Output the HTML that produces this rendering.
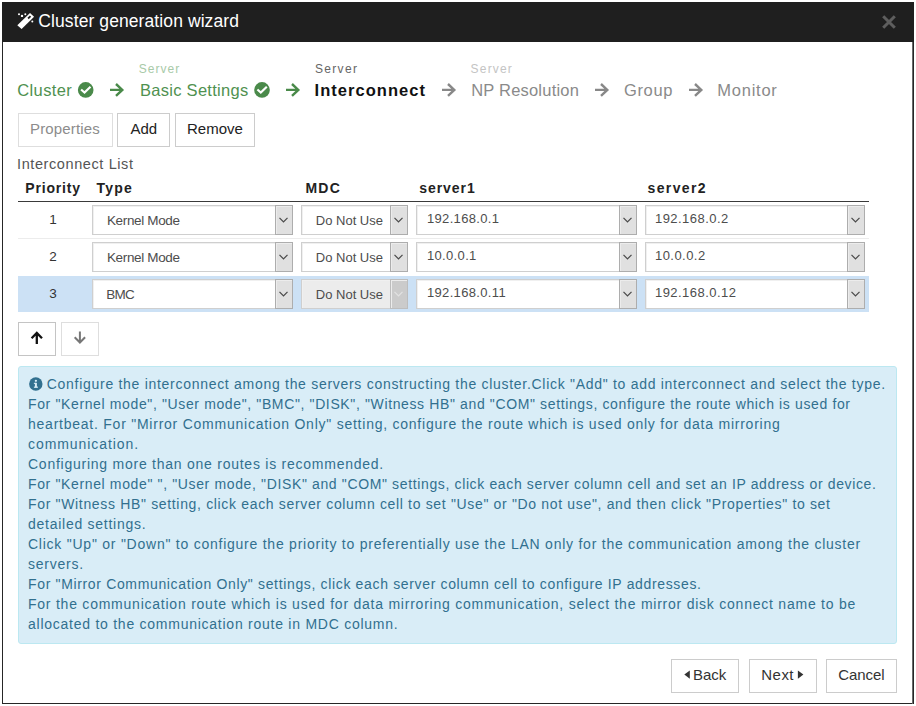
<!DOCTYPE html>
<html><head><meta charset="utf-8">
<style>
*{box-sizing:border-box;margin:0;padding:0}
html,body{width:916px;height:706px;background:#fff;overflow:hidden;font-family:"Liberation Sans",sans-serif}
.a{position:absolute;white-space:pre;line-height:30px}
.r{position:absolute}
.btn{position:absolute;border:1px solid #ccc;background:#fff}
.sel{position:absolute;border:1px solid #cfcfcf;background:#fff;height:30px;box-shadow:inset 1px 1px 0 #f0f0f0}
.sel i{position:absolute;right:-1px;top:-1px;width:18px;height:30px;background:#e0e0e0;border:1px solid #adadad;box-shadow:inset 1px 1px 0 #ececec}
</style></head><body>
<div class="r" style="left:2px;top:2px;width:912px;height:702px;border:1px solid #262626"></div>
<div class="r" style="left:912px;top:2px;width:1px;height:702px;background:#6a6a6a"></div>
<div class="r" style="left:2px;top:2px;width:912px;height:40px;background:#1f1f1f"></div>
<svg class="r" style="left:0;top:0" width="60" height="40" viewBox="0 0 60 40">
 <polygon points="17.3,25.3 21.6,29 34.1,16.7 30,13" fill="#fff"/>
 <polygon points="31.15,16.77 29.89,15.47 27.45,17.83 28.71,19.13" fill="#1f1f1f"/>
 <circle cx="19" cy="14.3" r="1" fill="#fff"/>
 <circle cx="22" cy="15.9" r="1.2" fill="#fff"/>
 <circle cx="25.3" cy="14.3" r="1" fill="#fff"/>
 <circle cx="32.3" cy="21.6" r="1" fill="#fff"/>
</svg>
<svg class="r" style="left:880px;top:13px" width="18" height="18" viewBox="0 0 18 18"><path d="M3.2 3.2 L14.8 14.8 M14.8 3.2 L3.2 14.8" stroke="#5e5e5e" stroke-width="3"/></svg>

<svg class="r" style="left:0;top:70px" width="800" height="40" viewBox="0 70 800 40">
 <defs>
  <g id="chk"><circle cx="0" cy="0" r="7.8" fill="#4a8a4a"/><path d="M-4.6 -0.4 L-1.2 2.6 L4.8 -3.2" stroke="#fff" stroke-width="2.2" fill="none"/></g>
  <path id="arw" d="M0 0 H12.5 M6 -5.9 L12.3 0 L6 5.9" stroke-width="2.4" fill="none"/>
 </defs>
 <use href="#chk" x="85.7" y="89.9"/>
 <use href="#chk" x="262" y="89.9"/>
 <use href="#arw" x="110" y="89.9" stroke="#4a8a4a"/>
 <use href="#arw" x="286" y="89.9" stroke="#4a8a4a"/>
 <use href="#arw" x="442" y="89.9" stroke="#888"/>
 <use href="#arw" x="595" y="89.9" stroke="#888"/>
 <use href="#arw" x="689" y="89.9" stroke="#888"/>
</svg>

<div class="btn" style="left:18px;top:113px;width:95px;height:34px;border-color:#dedede"></div>
<div class="btn" style="left:117px;top:113px;width:53px;height:34px"></div>
<div class="btn" style="left:175px;top:113px;width:80px;height:34px"></div>

<div class="r" style="left:18px;top:201px;width:851px;height:1px;background:#3a3a3a"></div>
<div class="r" style="left:18px;top:238px;width:851px;height:1px;background:#ececec"></div>
<div class="r" style="left:18px;top:276px;width:851px;height:36px;background:#cce1f5"></div>

<div class="sel" style="left:92px;top:205px;width:201px"><i></i></div>
<div class="sel" style="left:301px;top:205px;width:107px"><i></i></div>
<div class="sel" style="left:416px;top:205px;width:221px"><i></i></div>
<div class="sel" style="left:645px;top:205px;width:220px"><i></i></div>
<div class="sel" style="left:92px;top:242px;width:201px"><i></i></div>
<div class="sel" style="left:301px;top:242px;width:107px"><i></i></div>
<div class="sel" style="left:416px;top:242px;width:221px"><i></i></div>
<div class="sel" style="left:645px;top:242px;width:220px"><i></i></div>
<div class="sel" style="left:92px;top:279px;width:201px"><i></i></div>
<div class="sel" style="left:301px;top:279px;width:107px;background:#ececec"><i style="background:#cbcbcb;border-color:#bdbdbd"></i></div>
<div class="sel" style="left:416px;top:279px;width:221px"><i></i></div>
<div class="sel" style="left:645px;top:279px;width:220px"><i></i></div>

<svg class="r" style="left:0;top:190px" width="916" height="130" viewBox="0 190 916 130">
 <defs><path id="chev" d="M-4 -2 L0 2 L4 -2" stroke-width="1.25" fill="none"/></defs>
 <use href="#chev" x="283.5" y="219.9" stroke="#4a4a4a"/>
 <use href="#chev" x="398.5" y="219.9" stroke="#4a4a4a"/>
 <use href="#chev" x="627.5" y="219.9" stroke="#4a4a4a"/>
 <use href="#chev" x="855.5" y="219.9" stroke="#4a4a4a"/>
 <use href="#chev" x="283.5" y="256.9" stroke="#4a4a4a"/>
 <use href="#chev" x="398.5" y="256.9" stroke="#4a4a4a"/>
 <use href="#chev" x="627.5" y="256.9" stroke="#4a4a4a"/>
 <use href="#chev" x="855.5" y="256.9" stroke="#4a4a4a"/>
 <use href="#chev" x="283.5" y="293.9" stroke="#4a4a4a"/>
 <use href="#chev" x="398.5" y="293.9" stroke="#e2e2e2"/>
 <use href="#chev" x="627.5" y="293.9" stroke="#4a4a4a"/>
 <use href="#chev" x="855.5" y="293.9" stroke="#4a4a4a"/>
</svg>

<div class="btn" style="left:18px;top:322px;width:38px;height:34px;border-color:#c4c4c4"></div>
<div class="btn" style="left:61px;top:322px;width:38px;height:34px;border-color:#dedede"></div>
<svg class="r" style="left:0;top:320px" width="120" height="40" viewBox="0 320 120 40">
 <path d="M36.8 344 V333 M31.6 338.2 L36.8 333 L42 338.2" stroke="#111" stroke-width="2.3" fill="none"/>
 <path d="M79.9 331.5 V342.5 M74.7 337.3 L79.9 342.5 L85.1 337.3" stroke="#777" stroke-width="2" fill="none"/>
</svg>

<div class="r" style="left:18px;top:366px;width:879px;height:278px;background:#d9edf7;border:1px solid #bce8f1;border-radius:3px"></div>
<svg class="r" style="left:29px;top:377px" width="14" height="14" viewBox="0 0 14 14"><circle cx="6.8" cy="7" r="6.7" fill="#31708f"/><rect x="5.9" y="5.8" width="2" height="4.6" fill="#d9edf7"/><rect x="4.9" y="9.6" width="4" height="1.2" fill="#d9edf7"/><rect x="4.9" y="5.8" width="2" height="1.1" fill="#d9edf7"/><circle cx="6.9" cy="3.8" r="1.15" fill="#d9edf7"/></svg>

<div class="btn" style="left:671px;top:659px;width:68px;height:34px"></div>
<div class="btn" style="left:749px;top:659px;width:68px;height:34px"></div>
<div class="btn" style="left:826px;top:659px;width:71px;height:34px"></div>
<svg class="r" style="left:0;top:660px" width="916" height="40" viewBox="0 660 916 40">
 <polygon points="689.8,670.5 689.8,678.7 684.3,674.6" fill="#333"/>
 <polygon points="797.9,670.5 797.9,678.7 803.4,674.6" fill="#333"/>
</svg>
<div class="a" style="left:38.30px;top:6.0px;font-size:17.5px;font-weight:400;color:#ffffff;letter-spacing:0.092px">Cluster generation wizard</div>
<div class="a" style="left:138.80px;top:54.0px;font-size:12px;font-weight:400;color:#a8caa8;letter-spacing:1.000px">Server</div>
<div class="a" style="left:314.90px;top:53.9px;font-size:12px;font-weight:400;color:#666666;letter-spacing:1.340px">Server</div>
<div class="a" style="left:470.60px;top:53.8px;font-size:12px;font-weight:400;color:#c4c4c4;letter-spacing:1.180px">Server</div>
<div class="a" style="left:17.20px;top:74.8px;font-size:16.5px;font-weight:400;color:#4f9150;letter-spacing:0.400px">Cluster</div>
<div class="a" style="left:140.00px;top:74.6px;font-size:16.5px;font-weight:400;color:#4f9150;letter-spacing:0.277px">Basic Settings</div>
<div class="a" style="left:314.60px;top:74.9px;font-size:16.5px;font-weight:700;color:#111111;letter-spacing:1.036px">Interconnect</div>
<div class="a" style="left:471.20px;top:74.7px;font-size:16.5px;font-weight:400;color:#8a8a8a;letter-spacing:0.208px">NP Resolution</div>
<div class="a" style="left:623.90px;top:74.8px;font-size:16.5px;font-weight:400;color:#8a8a8a;letter-spacing:0.675px">Group</div>
<div class="a" style="left:717.30px;top:74.8px;font-size:16.5px;font-weight:400;color:#8a8a8a;letter-spacing:0.750px">Monitor</div>
<div class="a" style="left:30.00px;top:114.2px;font-size:15px;font-weight:400;color:#8c8c8c;letter-spacing:0.167px">Properties</div>
<div class="a" style="left:130.60px;top:114.2px;font-size:15px;font-weight:400;color:#222222;letter-spacing:-0.050px">Add</div>
<div class="a" style="left:187.00px;top:114.2px;font-size:15px;font-weight:400;color:#222222;letter-spacing:0.000px">Remove</div>
<div class="a" style="left:17.00px;top:148.9px;font-size:14.5px;font-weight:400;color:#555555;letter-spacing:0.600px">Interconnect List</div>
<div class="a" style="left:25.30px;top:173.0px;font-size:14px;font-weight:700;color:#222222;letter-spacing:0.814px">Priority</div>
<div class="a" style="left:96.60px;top:173.0px;font-size:14px;font-weight:700;color:#222222;letter-spacing:1.167px">Type</div>
<div class="a" style="left:305.50px;top:173.0px;font-size:14px;font-weight:700;color:#222222;letter-spacing:1.200px">MDC</div>
<div class="a" style="left:419.30px;top:173.0px;font-size:14px;font-weight:700;color:#222222;letter-spacing:0.933px">server1</div>
<div class="a" style="left:647.60px;top:173.0px;font-size:14px;font-weight:700;color:#222222;letter-spacing:1.350px">server2</div>
<div class="a" style="left:49.30px;top:205.4px;font-size:13.5px;font-weight:400;color:#333333;letter-spacing:0.000px">1</div>
<div class="a" style="left:106.90px;top:206.1px;font-size:13.5px;font-weight:400;color:#4d4d4d;letter-spacing:-0.340px">Kernel Mode</div>
<div class="a" style="left:315.80px;top:205.9px;font-size:13px;font-weight:400;color:#4d4d4d;letter-spacing:0.000px">Do Not Use</div>
<div class="a" style="left:49.30px;top:242.4px;font-size:13.5px;font-weight:400;color:#333333;letter-spacing:0.000px">2</div>
<div class="a" style="left:106.90px;top:243.1px;font-size:13.5px;font-weight:400;color:#4d4d4d;letter-spacing:-0.340px">Kernel Mode</div>
<div class="a" style="left:315.80px;top:242.9px;font-size:13px;font-weight:400;color:#4d4d4d;letter-spacing:0.000px">Do Not Use</div>
<div class="a" style="left:49.30px;top:279.4px;font-size:13.5px;font-weight:400;color:#333333;letter-spacing:0.000px">3</div>
<div class="a" style="left:106.20px;top:280.1px;font-size:13.5px;font-weight:400;color:#4d4d4d;letter-spacing:-0.700px">BMC</div>
<div class="a" style="left:315.80px;top:279.9px;font-size:13px;font-weight:400;color:#4d4d4d;letter-spacing:0.000px">Do Not Use</div>
<div class="a" style="left:426.90px;top:203.8px;font-size:13px;font-weight:400;color:#4d4d4d;letter-spacing:0.350px">192.168.0.1</div>
<div class="a" style="left:655.00px;top:203.8px;font-size:13px;font-weight:400;color:#4d4d4d;letter-spacing:0.450px">192.168.0.2</div>
<div class="a" style="left:426.90px;top:240.8px;font-size:13px;font-weight:400;color:#4d4d4d;letter-spacing:0.350px">10.0.0.1</div>
<div class="a" style="left:655.00px;top:240.8px;font-size:13px;font-weight:400;color:#4d4d4d;letter-spacing:0.450px">10.0.0.2</div>
<div class="a" style="left:426.90px;top:277.8px;font-size:13px;font-weight:400;color:#4d4d4d;letter-spacing:0.350px">192.168.0.11</div>
<div class="a" style="left:655.00px;top:277.8px;font-size:13px;font-weight:400;color:#4d4d4d;letter-spacing:0.450px">192.168.0.12</div>
<div class="a" style="left:693.00px;top:659.8px;font-size:15px;font-weight:400;color:#333333;letter-spacing:0.000px">Back</div>
<div class="a" style="left:761.30px;top:659.8px;font-size:15px;font-weight:400;color:#333333;letter-spacing:0.467px">Next</div>
<div class="a" style="left:838.30px;top:659.8px;font-size:15px;font-weight:400;color:#333333;letter-spacing:-0.100px">Cancel</div>
<div class="a" style="left:46.80px;top:368.7px;font-size:14px;font-weight:400;color:#31708f;letter-spacing:0.710px">Configure the interconnect among the servers constructing the cluster.Click "Add" to add interconnect and select the type.</div>
<div class="a" style="left:28.00px;top:388.7px;font-size:14px;font-weight:400;color:#31708f;letter-spacing:0.629px">For "Kernel mode", "User mode", "BMC", "DISK", "Witness HB" and "COM" settings, configure the route which is used for</div>
<div class="a" style="left:28.00px;top:408.7px;font-size:14px;font-weight:400;color:#31708f;letter-spacing:0.759px">heartbeat. For "Mirror Communication Only" setting, configure the route which is used only for data mirroring</div>
<div class="a" style="left:28.00px;top:428.7px;font-size:14px;font-weight:400;color:#31708f;letter-spacing:0.923px">communication.</div>
<div class="a" style="left:28.00px;top:448.7px;font-size:14px;font-weight:400;color:#31708f;letter-spacing:0.753px">Configuring more than one routes is recommended.</div>
<div class="a" style="left:28.00px;top:468.7px;font-size:14px;font-weight:400;color:#31708f;letter-spacing:0.636px">For "Kernel mode" ", "User mode, "DISK" and "COM" settings, click each server column cell and set an IP address or device.</div>
<div class="a" style="left:28.00px;top:488.7px;font-size:14px;font-weight:400;color:#31708f;letter-spacing:0.664px">For "Witness HB" setting, click each server column cell to set "Use" or "Do not use", and then click "Properties" to set</div>
<div class="a" style="left:28.00px;top:508.7px;font-size:14px;font-weight:400;color:#31708f;letter-spacing:0.735px">detailed settings.</div>
<div class="a" style="left:28.00px;top:528.7px;font-size:14px;font-weight:400;color:#31708f;letter-spacing:0.758px">Click "Up" or "Down" to configure the priority to preferentially use the LAN only for the communication among the cluster</div>
<div class="a" style="left:28.00px;top:548.7px;font-size:14px;font-weight:400;color:#31708f;letter-spacing:0.771px">servers.</div>
<div class="a" style="left:28.00px;top:568.7px;font-size:14px;font-weight:400;color:#31708f;letter-spacing:0.654px">For "Mirror Communication Only" settings, click each server column cell to configure IP addresses.</div>
<div class="a" style="left:28.00px;top:588.7px;font-size:14px;font-weight:400;color:#31708f;letter-spacing:0.766px">For the communication route which is used for data mirroring communication, select the mirror disk connect name to be</div>
<div class="a" style="left:28.00px;top:608.7px;font-size:14px;font-weight:400;color:#31708f;letter-spacing:0.748px">allocated to the communication route in MDC column.</div>

</body></html>
